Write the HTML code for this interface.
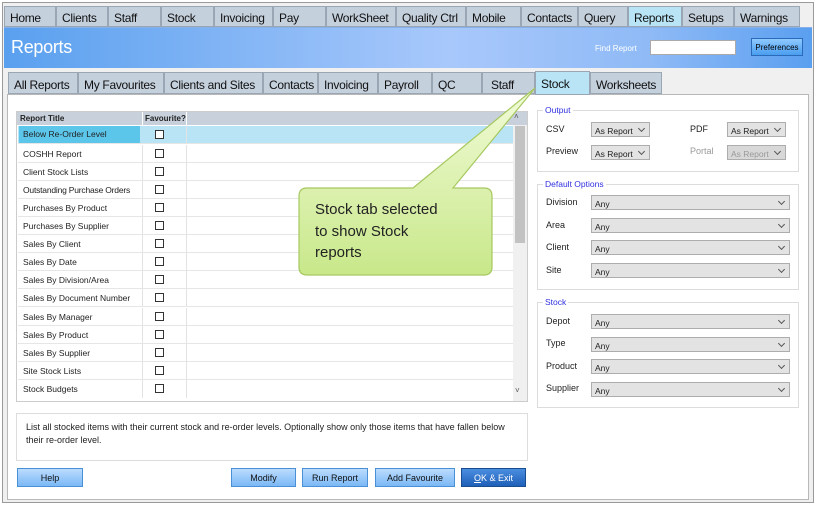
<!DOCTYPE html>
<html><head><meta charset="utf-8"><style>
*{box-sizing:border-box;margin:0;padding:0}
body{width:817px;height:506px;overflow:hidden;background:#fff;font-family:"Liberation Sans",sans-serif;position:relative}
.a{position:absolute}
.frame{left:2px;top:2px;width:812px;height:501px;border:1px solid #9a9a9a;background:#f0f0f0}
.tt{position:absolute;top:6px;height:21px;background:#c5d0dd;border:1px solid #9aa6b4;font-size:12px;letter-spacing:-0.3px;color:#111;padding:4px 0 0 5px;white-space:nowrap;overflow:hidden}
.tt.sel{background:#b8e4f6}
.st{position:absolute;top:72px;height:22px;background:#c5d0dd;border:1px solid #9aa6b4;font-size:12px;letter-spacing:-0.3px;color:#111;padding:5px 0 0 5px;white-space:nowrap;overflow:hidden}
.st.sel{background:#b8e4f6;top:71px;height:24px}
.hdr{left:4px;top:27px;width:808px;height:41px;background:linear-gradient(90deg,#5aa0ef 0%,#a8c8fb 55%,#8fbaf6 80%,#5a9ff0 100%);border-top:1px solid #88b0e8}
.panel{left:7px;top:94px;width:802px;height:406px;background:#fff;border:1px solid #b8b8b8}
.row{position:absolute;left:18px;width:495px;height:18px;border-bottom:1px solid #e6e6e6;font-size:8.5px;color:#222}
.row span{position:absolute;left:5px;top:4px}
.row i{position:absolute;left:137px;top:4px;width:9px;height:9px;border:1px solid #333;background:#fff}
.row b{position:absolute;left:124px;top:0;width:1px;height:18px;background:#e3e3e3}
.row u{position:absolute;left:168px;top:0;width:1px;height:18px;background:#e3e3e3}
.grp{position:absolute;border:1px solid #dcdcdc}
.gl{position:absolute;top:-6px;left:5px;background:#fff;color:#3030e0;font-size:8.5px;padding:0 2px}
.lb{position:absolute;font-size:9px;color:#222}
.dd{position:absolute;height:15px;background:#e3e3e3;border:1px solid #adadad;font-size:8.5px;color:#222;padding:3px 0 0 3px}
.dd:after{content:"";position:absolute;right:5px;top:3px;width:4px;height:4px;border-right:1px solid #555;border-bottom:1px solid #555;transform:rotate(45deg)}
.btn{position:absolute;top:468px;height:19px;background:linear-gradient(#bcdcff,#7ab8f5);border:1px solid #4a90d8;font-size:9px;color:#111;text-align:center;padding-top:4px}
</style></head><body>
<div class="a frame"></div>
<div class="tt" style="left:4px;width:52px">Home</div>
<div class="tt" style="left:56px;width:52px">Clients</div>
<div class="tt" style="left:108px;width:53px">Staff</div>
<div class="tt" style="left:161px;width:53px">Stock</div>
<div class="tt" style="left:214px;width:59px">Invoicing</div>
<div class="tt" style="left:273px;width:53px">Pay</div>
<div class="tt" style="left:326px;width:70px">WorkSheet</div>
<div class="tt" style="left:396px;width:70px">Quality Ctrl</div>
<div class="tt" style="left:466px;width:55px">Mobile</div>
<div class="tt" style="left:521px;width:57px">Contacts</div>
<div class="tt" style="left:578px;width:50px">Query</div>
<div class="tt sel" style="left:628px;width:54px">Reports</div>
<div class="tt" style="left:682px;width:52px">Setups</div>
<div class="tt" style="left:734px;width:66px">Warnings</div>
<div class="a hdr"></div>
<div class="a" style="left:11px;top:37px;font-size:18px;letter-spacing:-0.3px;color:#fff">Reports</div>
<div class="a" style="left:595px;top:44px;font-size:8px;color:#fff">Find Report</div>
<div class="a" style="left:650px;top:40px;width:86px;height:15px;background:#fff;border:1px solid #aaa"></div>
<div class="a" style="left:751px;top:38px;width:52px;height:18px;background:linear-gradient(#8ec8ff,#4a9ef0);border:1px solid #2a6ab8;font-size:8px;text-align:center;padding-top:4px">Preferences</div>
<div class="a panel"></div>
<div class="st" style="left:8px;width:70px">All Reports</div>
<div class="st" style="left:78px;width:86px">My Favourites</div>
<div class="st" style="left:164px;width:99px">Clients and Sites</div>
<div class="st" style="left:263px;width:55px">Contacts</div>
<div class="st" style="left:318px;width:60px">Invoicing</div>
<div class="st" style="left:378px;width:54px">Payroll</div>
<div class="st" style="left:432px;width:50px">QC</div>
<div class="st" style="left:482px;width:53px;padding-left:8px">Staff</div>
<div class="st sel" style="left:535px;width:55px">Stock</div>
<div class="st" style="left:590px;width:72px">Worksheets</div>

<div class="a" style="left:16px;top:111px;width:512px;height:291px;border:1px solid #ccc"></div>
<div class="a" style="left:17px;top:112px;width:510px;height:13px;background:#c7d0db;font-size:8px;font-weight:bold;color:#222">
<span class="a" style="left:3px;top:2px">Report Title</span><span class="a" style="left:128px;top:2px">Favourite?</span>
<span class="a" style="left:125px;top:0;width:1px;height:13px;background:#fff"></span><span class="a" style="left:169px;top:0;width:1px;height:13px;background:#fff"></span></div>
<div class="a" style="left:513px;top:125px;width:14px;height:276px;background:#f0f0f0"></div>
<div class="a" style="left:515px;top:126px;width:10px;height:117px;background:#c2c2c2"></div>
<div class="a" style="left:514px;top:112px;font-size:8px;color:#555">˄</div>
<div class="a" style="left:515px;top:386px;font-size:8px;color:#555">˅</div>
<div class="row" style="top:126px;background:#b8e4f6"><span style="left:1px;top:0;width:121px;height:17px;background:#5cc6ea;padding:3px 0 0 4px">Below Re-Order Level</span><i></i><u></u></div>
<div class="row" style="top:145px"><span>COSHH Report</span><b></b><i></i><u></u></div>
<div class="row" style="top:163px"><span>Client Stock Lists</span><b></b><i></i><u></u></div>
<div class="row" style="top:181px"><span style="letter-spacing:-0.2px">Outstanding Purchase Orders</span><b></b><i></i><u></u></div>
<div class="row" style="top:199px"><span>Purchases By Product</span><b></b><i></i><u></u></div>
<div class="row" style="top:217px"><span>Purchases By Supplier</span><b></b><i></i><u></u></div>
<div class="row" style="top:235px"><span>Sales By Client</span><b></b><i></i><u></u></div>
<div class="row" style="top:253px"><span>Sales By Date</span><b></b><i></i><u></u></div>
<div class="row" style="top:271px"><span>Sales By Division/Area</span><b></b><i></i><u></u></div>
<div class="row" style="top:289px"><span>Sales By Document Number</span><b></b><i></i><u></u></div>
<div class="row" style="top:308px"><span>Sales By Manager</span><b></b><i></i><u></u></div>
<div class="row" style="top:326px"><span>Sales By Product</span><b></b><i></i><u></u></div>
<div class="row" style="top:344px"><span>Sales By Supplier</span><b></b><i></i><u></u></div>
<div class="row" style="top:362px"><span>Site Stock Lists</span><b></b><i></i><u></u></div>
<div class="row" style="top:380px;border-bottom:none"><span>Stock Budgets</span><b></b><i></i><u></u></div>

<div class="a" style="left:16px;top:413px;width:512px;height:48px;border:1px solid #ddd;font-size:9px;color:#222;padding:7px 9px;line-height:13px">List all stocked items with their current stock and re-order levels. Optionally show only those items that have fallen below their re-order level.</div>
<div class="btn" style="left:17px;width:66px">Help</div>
<div class="btn" style="left:231px;width:65px">Modify</div>
<div class="btn" style="left:302px;width:66px">Run Report</div>
<div class="btn" style="left:375px;width:80px">Add Favourite</div>
<div class="btn" style="left:461px;width:65px;background:linear-gradient(#4a8ee0,#1e5fb8);border-color:#1a4c90;color:#fff"><u>O</u>K &amp; Exit</div>

<div class="grp" style="left:537px;top:110px;width:262px;height:62px"><span class="gl">Output</span></div>
<div class="lb" style="left:546px;top:124px">CSV</div>
<div class="lb" style="left:546px;top:146px">Preview</div>
<div class="lb" style="left:690px;top:124px">PDF</div>
<div class="lb" style="left:690px;top:146px;color:#999">Portal</div>
<div class="dd" style="left:591px;top:122px;width:59px">As Report</div>
<div class="dd" style="left:591px;top:145px;width:59px">As Report</div>
<div class="dd" style="left:727px;top:122px;width:59px">As Report</div>
<div class="dd" style="left:727px;top:145px;width:59px;color:#999;background:#d8d8d8">As Report</div>

<div class="grp" style="left:537px;top:184px;width:262px;height:106px"><span class="gl">Default Options</span></div>
<div class="lb" style="left:546px;top:197px">Division</div>
<div class="lb" style="left:546px;top:220px">Area</div>
<div class="lb" style="left:546px;top:242px">Client</div>
<div class="lb" style="left:546px;top:265px">Site</div>
<div class="dd" style="left:591px;top:195px;width:199px">Any</div>
<div class="dd" style="left:591px;top:218px;width:199px">Any</div>
<div class="dd" style="left:591px;top:240px;width:199px">Any</div>
<div class="dd" style="left:591px;top:263px;width:199px">Any</div>

<div class="grp" style="left:537px;top:302px;width:262px;height:106px"><span class="gl">Stock</span></div>
<div class="lb" style="left:546px;top:316px">Depot</div>
<div class="lb" style="left:546px;top:338px">Type</div>
<div class="lb" style="left:546px;top:361px">Product</div>
<div class="lb" style="left:546px;top:383px">Supplier</div>
<div class="dd" style="left:591px;top:314px;width:199px">Any</div>
<div class="dd" style="left:591px;top:337px;width:199px">Any</div>
<div class="dd" style="left:591px;top:359px;width:199px">Any</div>
<div class="dd" style="left:591px;top:382px;width:199px">Any</div>

<svg class="a" style="left:0;top:0" width="817" height="506">
<defs><linearGradient id="g" x1="0" y1="0" x2="0" y2="1"><stop offset="0" stop-color="#f2fbd8"/><stop offset="1" stop-color="#c8e88a"/></linearGradient></defs>
<path d="M309 188 H413 L535 88 L453 188 H484 Q492 188 492 196 V267 Q492 275 484 275 H307 Q299 275 299 267 V196 Q299 188 307 188 Z" fill="url(#g)" stroke="#a6c860" stroke-width="1.2"/>
<text x="315" y="214" font-family="Liberation Sans" font-size="15" fill="#222">Stock tab selected</text>
<text x="315" y="236" font-family="Liberation Sans" font-size="15" fill="#222">to show  Stock</text>
<text x="315" y="257" font-family="Liberation Sans" font-size="15" fill="#222">reports</text>
</svg>
</body></html>
